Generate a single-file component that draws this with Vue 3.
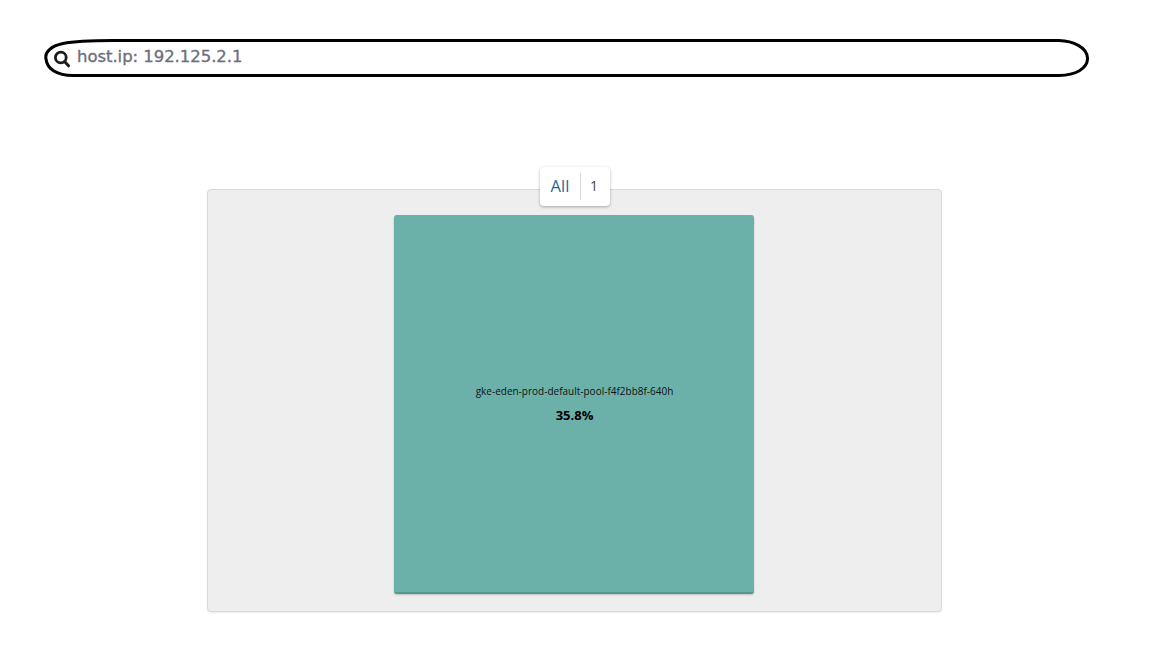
<template>
  <div class="page">
    <div class="search-bar">
      <svg class="sketch" viewBox="0 0 1046 40" preserveAspectRatio="none" fill="none">
        <path d="M3 21 C1.5 14 8 8 20 5.5 C32 3 48 2.5 70 2.5 L1016 2.5 C1030 3 1044 9 1044.5 20 C1045 31 1032 37 1016 37.5 L30 37.5 C14 37.5 4 31 3 21 Z" stroke="#000" stroke-width="3" />
      </svg>
      <svg class="search-icon" viewBox="0 0 18 18" fill="none">
        <circle cx="7.8" cy="7.5" r="5.4" stroke="#1c1c1c" stroke-width="2.8" />
        <path d="M11.5 11.5 L15.5 15.8" stroke="#1c1c1c" stroke-width="3" stroke-linecap="round" />
      </svg>
      <span class="query">host.ip: 192.125.2.1</span>
    </div>

    <div class="panel">
      <div class="tabs">
        <span class="tab active">All</span>
        <span class="tab-sep"></span>
        <span class="tab">1</span>
      </div>
      <div class="tile">
        <div class="tile-name">{{ node.name }}</div>
        <div class="tile-value">{{ node.usage }}%</div>
      </div>
    </div>
  </div>
</template>

<script setup>
const node = {
  name: 'gke-eden-prod-default-pool-f4f2bb8f-640h',
  usage: 35.8,
};
</script>

<style>
html,
body {
  margin: 0;
  background: #fff;
}
</style>

<style scoped>
.page {
  width: 1160px;
  height: 654px;
  padding-top: 38px;
  box-sizing: border-box;
  overflow: hidden;
  font-family: 'Open Sans', sans-serif;
}

.search-bar {
  position: relative;
  width: 1046px;
  height: 40px;
  margin-left: 43px;
  display: flex;
  align-items: center;
  padding-left: 10px;
  box-sizing: border-box;
}

.sketch {
  position: absolute;
  top: 0;
  left: 0;
  width: 100%;
  height: 100%;
}

.search-icon {
  width: 18px;
  height: 18px;
  margin-top: 2px;
  flex-shrink: 0;
}

.query {
  margin-left: 6px;
  margin-top: -3px;
  font-family: 'DejaVu Sans', sans-serif;
  font-size: 16.5px;
  font-weight: 500;
  color: #6f6f7b;
  -webkit-text-stroke: 0.35px #6f6f7b;
  letter-spacing: -0.05px;
}

.panel {
  position: relative;
  width: 735px;
  height: 423px;
  margin-top: 111px;
  margin-left: 207px;
  padding-top: 25px;
  padding-right: 2px;
  box-sizing: border-box;
  background: #eeeeee;
  border: 1px solid #d9d9d9;
  border-radius: 4px;
  box-shadow: 0 1px 2px rgba(0, 0, 0, 0.08);
  display: flex;
  justify-content: center;
  align-items: flex-start;
}

.tabs {
  position: absolute;
  top: -23px;
  left: 332px;
  width: 70px;
  height: 39px;
  box-sizing: border-box;
  background: #fff;
  border-radius: 4px;
  box-shadow: 0 1px 3px rgba(0, 0, 0, 0.3);
  display: flex;
  align-items: center;
}

.tab {
  width: 40px;
  margin-top: -2px;
  text-align: center;
  font-size: 14px;
  color: #444;
}

.tab:last-child {
  width: 26px;
}

.tab.active {
  font-size: 16.5px;
  color: #1f6a96;
}

.tab-sep {
  width: 1px;
  height: 27px;
  background: #d8d8d8;
}

.tile {
  width: 360px;
  height: 379px;
  box-sizing: border-box;
  padding-top: 167px;
  padding-left: 2px;
  background: #6bb1aa;
  border-bottom: 2px solid #57978f;
  border-radius: 3px;
  box-shadow: 0 1px 2px rgba(0, 0, 0, 0.2);
  text-align: center;
  color: #111;
}

.tile-name {
  font-size: 10px;
  line-height: 18px;
}

.tile-value {
  margin-top: 6px;
  font-size: 13px;
  font-weight: 700;
  line-height: 18px;
  color: #000;
}
</style>
